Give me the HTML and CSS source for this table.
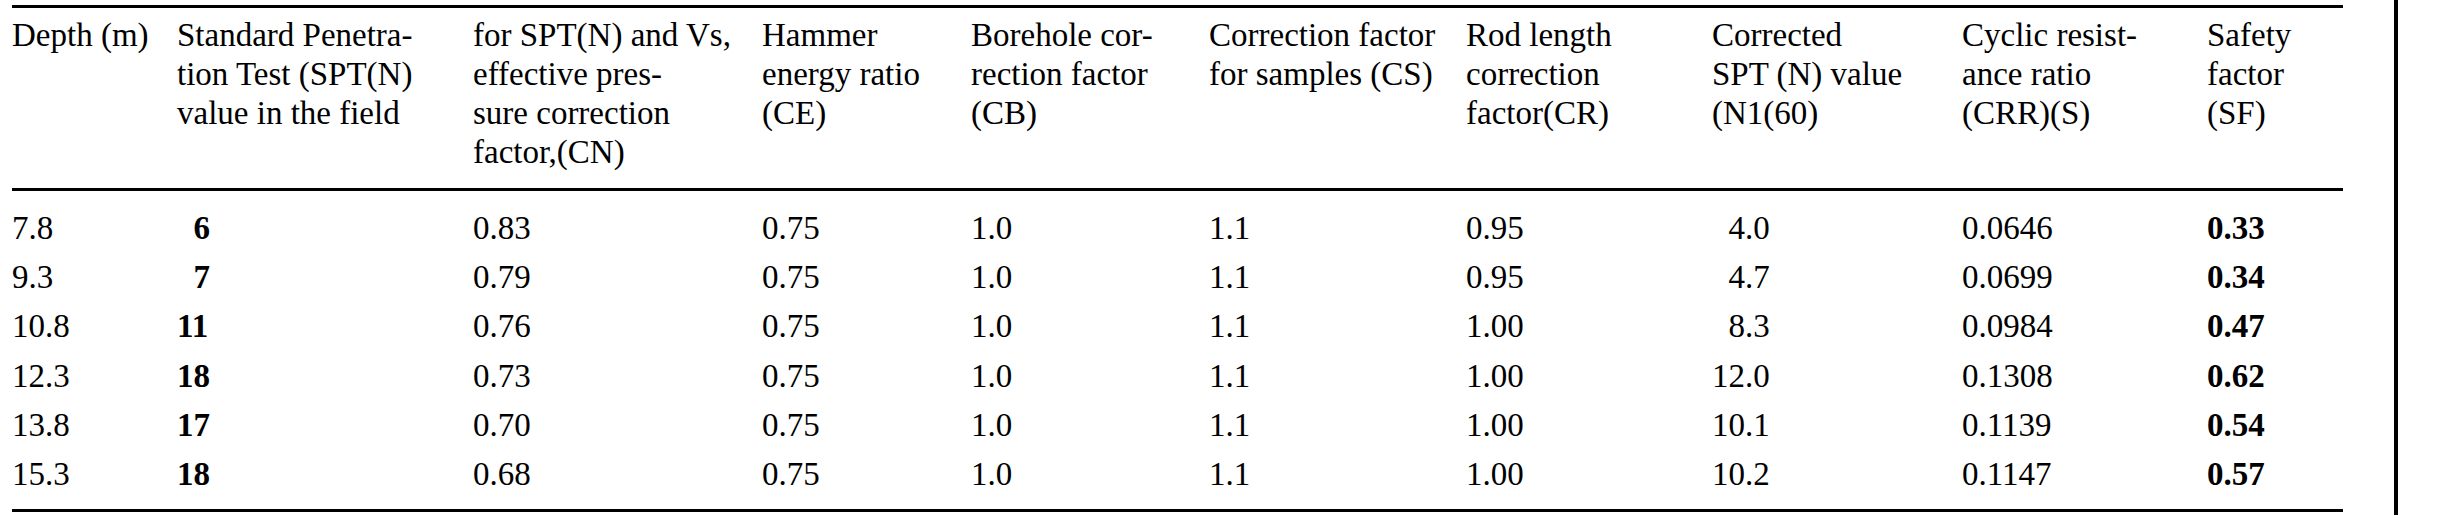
FILE: index.html
```html
<!DOCTYPE html>
<html lang="en">
<head>
<meta charset="utf-8">
<title>SPT correction table</title>
<link rel="stylesheet" href="styles.css">
</head>
<body>
<div class="page">
  <div class="wrap">
    <table class="tbl">
      <colgroup>
        <col class="w1"><col class="w2"><col class="w3"><col class="w4"><col class="w5">
        <col class="w6"><col class="w7"><col class="w8"><col class="w9"><col class="w10">
      </colgroup>
      <thead>
        <tr>
          <th>Depth (m)</th>
          <th>Standard Penetra-<br>tion Test (SPT(N)<br>value in the field</th>
          <th>for SPT(N) and Vs,<br>effective pres-<br>sure correction<br>factor,(CN)</th>
          <th>Hammer<br>energy ratio<br>(CE)</th>
          <th>Borehole cor-<br>rection factor<br>(CB)</th>
          <th>Correction factor<br>for samples (CS)</th>
          <th>Rod length<br>correction<br>factor(CR)</th>
          <th>Corrected<br>SPT (N) value<br>(N1(60)</th>
          <th>Cyclic resist-<br>ance ratio<br>(CRR)(S)</th>
          <th>Safety<br>factor<br>(SF)</th>
        </tr>
      </thead>
      <tbody>
        <tr>
          <td>7.8</td><td class="b"><span class="pad">6</span></td><td>0.83</td><td>0.75</td><td>1.0</td><td>1.1</td><td>0.95</td><td><span class="pad">4.0</span></td><td>0.0646</td><td class="b">0.33</td>
        </tr>
        <tr>
          <td>9.3</td><td class="b"><span class="pad">7</span></td><td>0.79</td><td>0.75</td><td>1.0</td><td>1.1</td><td>0.95</td><td><span class="pad">4.7</span></td><td>0.0699</td><td class="b">0.34</td>
        </tr>
        <tr>
          <td>10.8</td><td class="b">11</td><td>0.76</td><td>0.75</td><td>1.0</td><td>1.1</td><td>1.00</td><td><span class="pad">8.3</span></td><td>0.0984</td><td class="b">0.47</td>
        </tr>
        <tr>
          <td>12.3</td><td class="b">18</td><td>0.73</td><td>0.75</td><td>1.0</td><td>1.1</td><td>1.00</td><td>12.0</td><td>0.1308</td><td class="b">0.62</td>
        </tr>
        <tr>
          <td>13.8</td><td class="b">17</td><td>0.70</td><td>0.75</td><td>1.0</td><td>1.1</td><td>1.00</td><td>10.1</td><td>0.1139</td><td class="b">0.54</td>
        </tr>
        <tr>
          <td>15.3</td><td class="b">18</td><td>0.68</td><td>0.75</td><td>1.0</td><td>1.1</td><td>1.00</td><td>10.2</td><td>0.1147</td><td class="b">0.57</td>
        </tr>
      </tbody>
    </table>
  </div>
  <div class="vbar"></div>
</div>
</body>
</html>
```
FILE: styles.css
```css
html, body {
  margin: 0;
  padding: 0;
  background: #fff;
}

.page {
  display: flex;
  align-items: flex-start;
  height: 515px;
  overflow: hidden;
}

.wrap {
  padding: 5px 0 0 12px;
}

.tbl {
  border-collapse: separate;
  border-spacing: 0;
  table-layout: fixed;
  width: 2331px;
  font-family: "Liberation Serif", "Times New Roman", serif;
  font-size: 33px;
  color: #000;
}

.w1 { width: 165px; }
.w2 { width: 296px; }
.w3 { width: 289px; }
.w4 { width: 209px; }
.w5 { width: 238px; }
.w6 { width: 257px; }
.w7 { width: 246px; }
.w8 { width: 250px; }
.w9 { width: 245px; }
.w10 { width: 136px; }

.tbl th {
  font-weight: normal;
  text-align: left;
  vertical-align: top;
  white-space: nowrap;
  line-height: 39px;
  padding: 8px 0 0 0;
  height: 186px;
  box-sizing: border-box;
  border-top: 3px solid #000;
  border-bottom: 3px solid #000;
}

.tbl td {
  padding: 0;
  line-height: 49.2px;
  white-space: nowrap;
  text-align: left;
}

.tbl tbody tr:first-child td {
  padding-top: 13px;
}

.tbl tbody tr:last-child td {
  padding-bottom: 10px;
  border-bottom: 3px solid #000;
}

.b {
  font-weight: bold;
}

.pad {
  padding-left: 0.5em;
}

.vbar {
  flex: none;
  margin-left: 51px;
  width: 4px;
  height: 515px;
  background: #000;
}
```
